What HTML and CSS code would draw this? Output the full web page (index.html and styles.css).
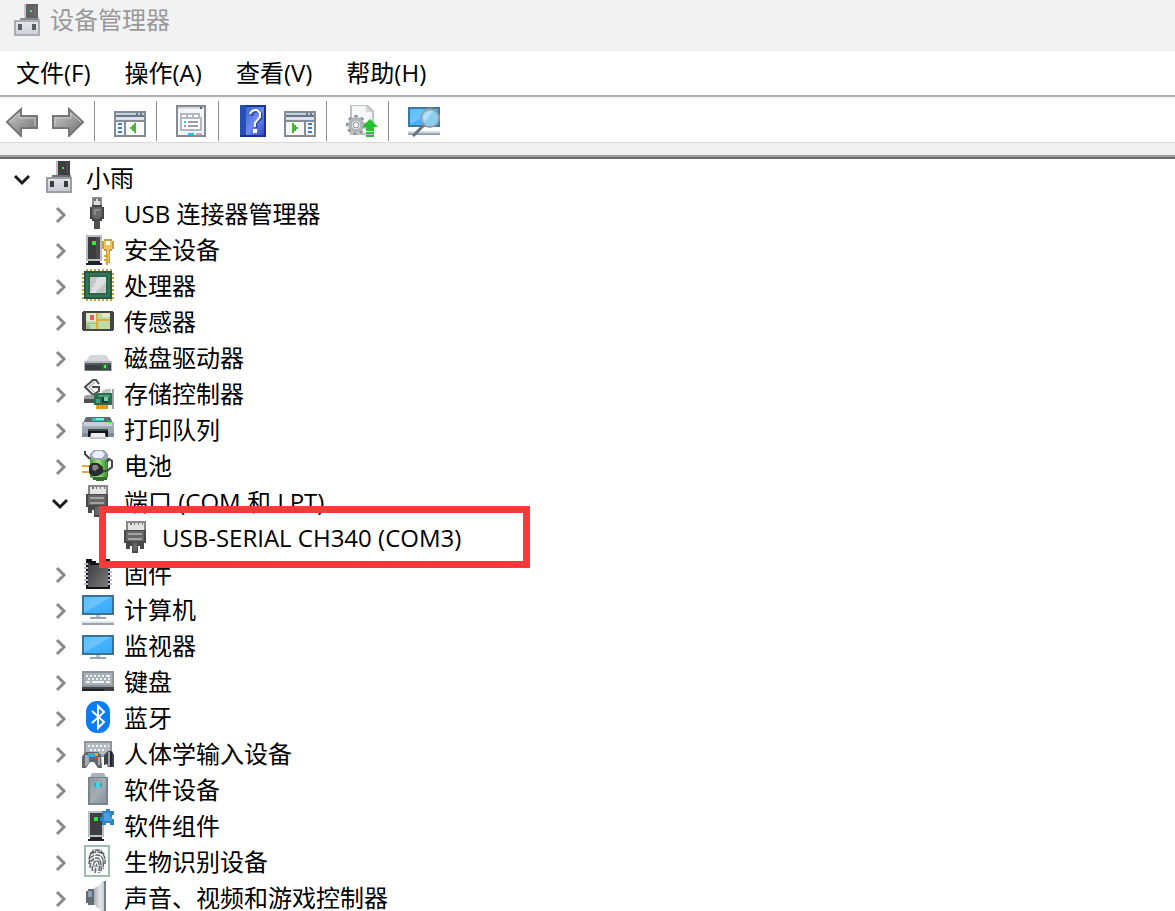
FILE: index.html
```html
<!DOCTYPE html>
<html lang="zh-CN">
<head>
<meta charset="utf-8">
<title>设备管理器</title>
<link rel="stylesheet" href="styles.css">
</head>
<body>
<svg class="defs" aria-hidden="true">
  <defs>
    <linearGradient id="screen" x1="0" y1="0" x2="1" y2="1"><stop offset="0" stop-color="#5cbcf8"/><stop offset=".45" stop-color="#6cc6ff"/><stop offset=".5" stop-color="#45b4ff"/><stop offset="1" stop-color="#35a8fb"/></linearGradient>
    <linearGradient id="steel" x1="0" y1="0" x2="0" y2="1"><stop offset="0" stop-color="#e2e4e8"/><stop offset="1" stop-color="#c8cad0"/></linearGradient>
    <linearGradient id="dark" x1="0" y1="0" x2="1" y2="1"><stop offset="0" stop-color="#3c3c3c"/><stop offset="1" stop-color="#7a7a7a"/></linearGradient>
    <linearGradient id="arrow" x1="0" y1="0" x2="1" y2="1"><stop offset="0" stop-color="#c8c8c8"/><stop offset=".55" stop-color="#999"/><stop offset="1" stop-color="#707070"/></linearGradient>
    <linearGradient id="help" x1="0" y1="0" x2="1" y2="1"><stop offset="0" stop-color="#3e66c8"/><stop offset=".5" stop-color="#6f8cf0"/><stop offset="1" stop-color="#2e4cc0"/></linearGradient>
    <linearGradient id="cell" x1="0" y1="0" x2="1" y2="0"><stop offset="0" stop-color="#3f9a2e"/><stop offset=".45" stop-color="#9be87c"/><stop offset="1" stop-color="#2f8a24"/></linearGradient>
    <linearGradient id="cone" x1="0" y1="0" x2="1" y2="0"><stop offset="0" stop-color="#a4acb3"/><stop offset=".5" stop-color="#e4e7ea"/><stop offset="1" stop-color="#b9c0c6"/></linearGradient>
    <linearGradient id="slab" x1="0" y1="0" x2="1" y2="1"><stop offset="0" stop-color="#8e979f"/><stop offset=".5" stop-color="#a5adb4"/><stop offset="1" stop-color="#87919a"/></linearGradient>
    <symbol id="machine" viewBox="0 0 32 32">
      <path fill="#bcc0c4" d="M12 0h14v15H12z"/><path fill="#3f3f41" d="M14 0h12v14H14z"/><path fill="#4b4b4e" d="M22 2h2v10h-2z"/><path fill="#30e83a" d="M18 6h2v2h-2z"/>
      <path fill="#6b6e74" d="M8 14h19v2H8z"/><path fill="#9a9da3" d="M2 16h26v16H2z"/><path fill="url(#steel)" d="M4 18h22v12H4z"/><path fill="#3a3b40" d="M6 20h4v6H6zM20 20h4v6h-4z"/>
    </symbol>
    <symbol id="usb" viewBox="0 0 32 32">
      <path fill="#8b8b8b" d="M10 0h10v8H10z"/><path fill="#dedede" d="M12 2h6v6h-6z"/><path fill="#666" d="M12 2h2v2h-2zM16 2h2v2h-2z"/>
      <path fill="#444" d="M8 10h2V8h10v2h2v12h-2v2H10v-2H8z"/><path fill="#666" d="M10 10h10v10h-2v2h-6v-2h-2z"/><path fill="#8c8c8c" d="M12 12h6v6h-6z"/><path fill="#686868" d="M14 14h4v4h-4z"/><path fill="#505050" d="M12 24h6v8h-6z"/>
    </symbol>
    <symbol id="security" viewBox="0 0 32 32">
      <path fill="#b8bec6" d="M4 2h16v26H4z"/><path fill="#3d3d3f" d="M6 4h12v22H6z"/><path fill="#4b4b4d" d="M14 4h4v22h-4z"/><path fill="#25f12c" d="M10 8h4v4h-4z"/><path fill="#202326" d="M6 28h12v2h2v2H4v-2h2z"/>
      <path fill="#c79a45" d="M22 6h8v2h2v8h-2v2h-2v12h-2v2h-2V18h-2v-2h-2V8h2z"/><path fill="#f0c45c" d="M22 8h8v8h-3v13h-2V16h-3z"/><path fill="#fff" d="M24 8h4v4h-4z"/><path fill="#d9a030" d="M22 22h4v2h-4zM22 26h4v2h-4z"/>
    </symbol>
    <symbol id="cpu" viewBox="0 0 32 32">
      <path fill="none" stroke="#c9a045" stroke-width="32" stroke-dasharray="2 2" d="M4 16h26"/><path fill="none" stroke="#c9a045" stroke-width="32" stroke-dasharray="2 2" d="M16 4v26"/>
      <path fill="#235943" d="M2 2h28v28H2z"/><path fill="#347557" d="M4 4h24v24H4z"/><path fill="#2b674d" d="M6 6h20v20H6z"/><path fill="#c4c5c6" d="M8 8h16v16H8z"/><path fill="#dedfe0" d="M16 8h8v6h-2v2h-2v2h-2v2h-2v2h-2v2H8v-2h2v-4h2v-4h2v-4h2z"/>
    </symbol>
    <symbol id="sensor" viewBox="0 0 32 32">
      <path fill="#454545" d="M1 6h30v1h1v18h-1v1H1v-1H0V7h1z"/><path fill="#bedba0" d="M4 8h24v16H4z"/><path fill="#dcebc8" d="M4 8h10v8H4zM20 8h8v4h-8z"/><path fill="#9fbc87" d="M4 20h4v4H4z"/><path fill="#dcad3c" d="M14 8h2v16h-2zM16 14h12v2H16zM4 18h10v1H4z"/><path fill="#e55b60" d="M8 10h4v5H8z"/>
    </symbol>
    <symbol id="disk" viewBox="0 0 32 32">
      <path fill="#d4d6d9" d="M8 14h16l5 7H3z"/><path fill="#b5b8bd" d="M2 20h28v10H2z"/><path fill="#3d4145" d="M3 22h26v7H3z"/><path fill="#54595f" d="M3 22h26v2H3z"/><path fill="#247a28" d="M20 24h6v4h-6z"/><path fill="#39ff3d" d="M22 24h2v3h-2z"/><path fill="#777c84" d="M3 29h26v1H3z"/>
    </symbol>
    <symbol id="storage" viewBox="0 0 32 32">
      <path fill="#f4f4f4" stroke="#4c4c4c" stroke-width="2" d="M17 7l-3-4h-3l-8 7 8 8 6-4v-4h-7"/><path fill="none" stroke="#999" stroke-width="1" d="M13 5l-6 5 5 5"/><path fill="#9b9fa3" d="M2 20l2-2h10v8H2z"/><path fill="#4c5053" d="M2 22h10v4H2z"/><path fill="#a1a5a8" d="M30 12h2v20h-2z"/>
      <path fill="#bfc4c8" d="M20 14l4-2h5v5h-9z"/><path fill="#286d50" d="M12 18l4-2h14v12H12z"/><path fill="#48a277" d="M16 18h12v2H16zM14 22h4v4h-4z"/><path fill="#183f31" d="M20 20h6v6h-6z"/><path fill="#82c9a5" d="M22 20h4v4h-4z"/><path fill="#f2a21c" d="M14 28h12v4H14z"/><path fill="#d87f0c" d="M16 28h1v4h-1zM20 28h1v4h-1zM24 28h1v4h-1z"/>
    </symbol>
    <symbol id="printer" viewBox="0 0 32 32">
      <path fill="#606970" d="M4 4h24l3 6H1z"/><path fill="#39beb4" d="M10 5h12v3H10z"/><path fill="#7beae0" d="M14 5h8v2h-8z"/><path fill="#aab4be" d="M0 9h32v14H0z"/><path fill="#c7ced5" d="M2 9h28v4H2z"/><path fill="#7f8c99" d="M0 18h32v6H0z"/><path fill="#9ba7b2" d="M0 14h32v6H0z"/><path fill="#16e524" d="M26 8h3v2h-3z"/><path fill="#111518" d="M6 16h20v8H6z"/><path fill="#3e454b" d="M6 16h20v2H6z"/><path fill="#eee" d="M9 20h14l1 6H8z"/><path fill="#c6c6c6" d="M8 24h16v2H8z"/>
    </symbol>
    <symbol id="battery" viewBox="0 0 32 32">
      <path fill="url(#cell)" d="M8 6h18v22l-3 3H13l-5-3z"/><path fill="#306e29" d="M11 28h14v3h-3v1h-8v-1h-3z"/><path fill="#9aa2b4" d="M8 5l4-4h10l4 4v4l-3 2H12L8 9z"/><path fill="#eceefa" d="M11 4l3-2h6l3 3-3 4h-7l-3-2z"/>
      <path fill="none" stroke="#444" stroke-width="2" d="M3 2v3l5 5M20 22h5l5-4v-6l-3-2-2 3"/><path fill="#e1ad35" d="M0 16h8v2H0zM0 22h8v2H0z"/><path fill="#2c2c2e" d="M10 14h6l5 4v6l-5 3h-6l-3-3v-7z"/><path fill="#89898c" d="M11 16h4l2 3-4 3-3-2z"/>
    </symbol>
    <symbol id="port" viewBox="0 0 32 32">
      <path fill="#878787" d="M6 0h20v9H6z"/><path fill="#e3e3e3" d="M8 2h16v7H8z"/><path fill="#777" d="M10 2h2v2h-2zM14 2h1v2h-1zM18 2h1v2h-1zM22 2h1v2h-1z"/><path fill="#494949" d="M4 9h22v13H4zM6 22h4v6H6zM20 22h4v6h-4zM10 22h10v3H10zM12 24h6v8h-6z"/><path fill="#686868" d="M6 10h18v10H6zM13 22h4v8h-4z"/><path fill="#a4a4a4" d="M8 12h14v2H8zM8 17h14v2H8z"/>
    </symbol>
    <symbol id="firmware" viewBox="0 0 32 32">
      <path fill="#151515" d="M4 2h6v2h4v2h4V4h2V2h8v30H4z"/><path fill="url(#dark)" d="M6 6h2v2h10V6h8v24H6z"/><path fill="#b9bec8" d="M2 6h4v2H2zM2 10h4v2H2zM2 14h4v2H2zM2 18h4v2H2zM2 22h4v2H2zM2 26h4v2H2zM26 6h4v2h-4zM26 10h4v2h-4zM26 14h4v2h-4zM26 18h4v2h-4zM26 22h4v2h-4zM26 26h4v2h-4z"/>
    </symbol>
    <symbol id="computer" viewBox="0 0 32 32">
      <path fill="#3c7296" d="M0 2h32v20H0z"/><path fill="url(#screen)" d="M2 4h28v16H2z"/><path fill="#b8c1ca" d="M14 22h4v2h-4z"/><path fill="#93a6b7" d="M8 24h16v2H8z"/><path fill="#e1e6eb" d="M0 28h32v2H0z"/><path fill="#94a2b4" d="M0 30h32v2H0z"/>
    </symbol>
    <symbol id="monitor" viewBox="0 0 32 32">
      <path fill="#3c7296" d="M0 6h32v20H0z"/><path fill="url(#screen)" d="M2 8h28v16H2z"/><path fill="#b8c1ca" d="M14 26h4v2h-4z"/><path fill="#93a6b7" d="M8 28h16v2H8z"/>
    </symbol>
    <symbol id="keyboard" viewBox="0 0 32 32">
      <path fill="#8e959c" d="M0 6h32v16H0z"/><path fill="#a9b0b6" d="M2 8h28v12H2z"/><path fill="#3b4146" d="M0 22h32v4H0z"/><path fill="#1f2225" d="M0 24h22v2H0z"/><path fill="#f0f2f4" d="M4 10h2v2H4zM8 10h2v2H8zM12 10h2v2h-2zM16 10h2v2h-2zM20 10h2v2h-2zM24 10h4v2h-4zM6 13h2v2H6zM10 13h2v2h-2zM14 13h2v2h-2zM18 13h2v2h-2zM22 13h2v2h-2zM26 13h2v2h-2zM4 16h4v2H4zM10 16h12v2H10zM24 16h4v2h-4z"/>
    </symbol>
    <symbol id="bluetooth" viewBox="0 0 32 32">
      <rect x="4" width="24" height="32" rx="11" fill="#0b7cf5"/><path fill="none" stroke="#fff" stroke-width="2" d="M10 10l12 11-6 6V5l6 6-12 11"/>
    </symbol>
    <symbol id="hid" viewBox="0 0 32 32">
      <path fill="#8e959c" d="M2 4h28v16H2z"/><path fill="#b3bac0" d="M4 6h24v12H4z"/><path fill="#f4f5f6" d="M6 8h2v2H6zM10 8h2v2h-2zM14 8h2v2h-2zM18 8h2v2h-2zM22 8h2v2h-2zM26 8h1v2h-1zM8 12h2v2H8zM12 12h2v2h-2zM16 12h2v2h-2zM20 12h2v2h-2z"/>
      <path fill="#5e656b" d="M1 18l3-3h12l3 3 1 13h-4l-4-6H8l-4 6H0V20z"/><path fill="#a4abb1" d="M3 18h4v8l-4 4zM16 20h2v8h-2z"/><path fill="#3aa8e8" d="M6 16h7v4H6z"/><path fill="#f9a633" d="M13 16h3v3h-3z"/><path fill="#ec3f3b" d="M13 20h2v2h-2z"/><path fill="#3e444a" d="M22 18l4-4h4l2 4v12h-6l-1-3-3 1z"/><path fill="#9aa2aa" d="M26 15h2v14h-2z"/><path fill="#20262b" d="M28 15h2v14h-2z"/>
    </symbol>
    <symbol id="device" viewBox="0 0 32 32">
      <path fill="#aab1b8" d="M10 0h12l2 4H8z"/><path fill="#788490" d="M6 4h20v28H6z"/><path fill="url(#slab)" d="M8 5h16v25H8z"/><path fill="#4f9ba4" d="M12 10h8v4h-8z"/><path fill="#35dbe7" d="M14 9h4v6h-4z"/>
    </symbol>
    <symbol id="component" viewBox="0 0 32 32">
      <path fill="#b9bfc6" d="M6 2h16v26H6z"/><path fill="#3f3f41" d="M8 4h12v22H8z"/><path fill="#25ee2a" d="M12 8h4v4h-4z"/><path fill="#22272a" d="M8 28h12v2h2v2H6v-2h2z"/><path fill="#2c83c5" d="M20 2h4V0h4v2h4v4h-2v4h2v6h-4v-2h-4v2h-4v-4h-2V8h2z"/><path fill="#4b9ddb" d="M22 4h6v4h2v4h-8z"/>
    </symbol>
    <symbol id="biometric" viewBox="0 0 32 32">
      <path fill="#9dbdb4" d="M2 0h26v32H2z"/><path fill="#f7f8f8" d="M4 2h22v28H4z"/><path fill="none" stroke="#5c6468" stroke-width="1.4" stroke-dasharray="5 1" d="M8 9q7-8 14 0M7 14q1-7 8-7t8 7v5M7 19q0-9 8-9t6 14M8 23q0-10 7-10 5 0 4 14M10 26q1-10 5-10 3 0 2 12M13 28q1-9 2-9"/><path fill="none" stroke="#777f83" stroke-width="1" stroke-dasharray="2 1" d="M10 5h10M8 16h14M8 21h13M10 25h10"/>
    </symbol>
    <symbol id="sound" viewBox="0 0 32 32">
      <path fill="#5f6c78" d="M4 10h2V8h6v16H6v-2H4z"/><path fill="#8fa1ae" d="M6 10h4v6H6z"/><path fill="url(#cone)" d="M12 8l2-2h2V4h2V2h2V0h4v32h-4v-2h-2v-2h-2v-2h-2v-2h-2z"/><path fill="#737f8a" d="M22 0h2v32h-2z"/>
    </symbol>
    <symbol id="back" viewBox="0 0 32 32">
      <path fill="url(#arrow)" stroke="#777" stroke-width="2" d="M1 17L15 4v7h16v12H15v8z"/><path fill="none" stroke="#ccc" d="M3 17L13 8v5h16v8"/>
    </symbol>
    <symbol id="forward" viewBox="0 0 32 32">
      <path fill="url(#arrow)" stroke="#777" stroke-width="2" d="M31 17L17 4v7H1v12h16v8z"/><path fill="none" stroke="#ccc" d="M29 17L19 8v5H3v8"/>
    </symbol>
    <symbol id="pane-left" viewBox="0 0 32 32">
      <path fill="#868c95" d="M0 6h32v26H0z"/><path fill="#c9d2dd" d="M2 8h28v2H2z"/><path fill="#66758c" d="M2 10h28v2H2zM22 8h2v2h-2zM26 8h2v2h-2z"/><path fill="#dce2e8" d="M2 12h28v3H2z"/><path fill="#f8f9fb" d="M2 17h8v13H2zM12 17h18v13H12z"/><path fill="#457dbd" d="M4 18h4v2H4zM4 22h4v2H4zM4 26h4v2H4z"/><path fill="#4db535" d="M16 22h2v-2h2v-2h2v10h-2v-2h-2v-2h-2z"/>
    </symbol>
    <symbol id="properties" viewBox="0 0 32 32">
      <path fill="#858b94" d="M0 0h30v32H0z"/><path fill="#f6f7f8" d="M2 2h26v28H2z"/><path fill="#d4dbe4" d="M2 2h26v2H2z"/><path fill="#49658c" d="M24 2h2v2h-2z"/><path fill="#b1b8c3" d="M4 8h20v4h2v14H4z"/><path fill="#fff" d="M6 14h18v10H6zM6 10h4v2H6zM12 10h4v2h-4zM18 10h4v2h-4z"/><path fill="#16c5f2" d="M8 16h2v2H8zM12 28h6v2h-6z"/><path fill="#999fa7" d="M12 16h10v2H12zM8 20h2v2H8zM12 20h10v2H12z"/><path fill="#b2b7bd" d="M20 28h6v2h-6z"/>
    </symbol>
    <symbol id="question" viewBox="0 0 32 32">
      <path fill="#173599" d="M2 0h26v32H2z"/><path fill="url(#help)" d="M8 2h18v28H8z"/><path fill="#2450b7" d="M2 0h6v30H2z"/><path fill="none" stroke="#2c48aa" stroke-width="3" d="M14 11V8l3-2h3l3 3v4l-5 5v5"/><path fill="none" stroke="#fff" stroke-width="2" d="M12 9l2-3 3-1h2l3 3v4l-5 6v4"/><path fill="#fff" d="M15 24h4v4h-4z"/>
    </symbol>
    <symbol id="pane-right" viewBox="0 0 32 32">
      <path fill="#868c95" d="M0 6h32v26H0z"/><path fill="#c9d2dd" d="M2 8h28v2H2z"/><path fill="#66758c" d="M2 10h28v2H2zM22 8h2v2h-2zM26 8h2v2h-2z"/><path fill="#dce2e8" d="M2 12h28v3H2z"/><path fill="#f8f9fb" d="M2 17h18v13H2zM22 17h8v13h-8z"/><path fill="#457dbd" d="M24 18h4v2h-4zM24 22h4v2h-4zM24 26h4v2h-4z"/><path fill="#4db535" d="M8 18h2v2h2v2h2v2h-2v2h-2v2H8z"/>
    </symbol>
    <symbol id="update" viewBox="0 0 32 32">
      <path fill="#bfc2c5" d="M4 0h18l6 6v24H4z"/><path fill="#f5f6f7" d="M6 1h14v6h6v21H6z"/><path fill="#d7dadd" d="M20 1l6 6h-6z"/><circle cx="10" cy="20" r="8" fill="none" stroke="#8c9196" stroke-width="4" stroke-dasharray="3 3"/><circle cx="10" cy="20" r="6" fill="#fff" stroke="#afb4b9" stroke-width="4"/><circle cx="10" cy="20" r="3" fill="#f5f5f5" stroke="#858b90"/><path fill="#23c32c" d="M16 22l8-8 8 8h-4v4h-8v-4zM20 27h8v2h-8zM20 30h8v2h-8z"/>
    </symbol>
    <symbol id="scan" viewBox="0 0 32 32">
      <path fill="#3e789f" d="M0 2h32v20H0z"/><path fill="url(#screen)" d="M2 4h28v16H2z"/><path fill="#d4dbe2" d="M0 26h32v2H0z"/><path fill="#92a3b3" d="M0 28h32v2H0z"/><path stroke="#65737f" stroke-width="3" d="M16 20L5 31"/><circle cx="22" cy="13" r="9" fill="#8dceef" stroke="#8f9eaa" stroke-width="2"/><path fill="#b4e1fb" d="M15 12q2-7 10-6l-8 11z"/>
    </symbol>
    <symbol id="closed" viewBox="0 0 20 20"><path fill="none" stroke="#8b8b8b" stroke-width="3" d="M7 3l7 7-7 7"/></symbol>
    <symbol id="open" viewBox="0 0 20 20"><path fill="none" stroke="#1b1b1b" stroke-width="3" d="M3 7l7 7 7-7"/></symbol>
  </defs>
</svg>
<div class="window">
  <header class="titlebar"><svg class="icon title-icon"><use href="#machine"/></svg><h1 class="title">设备管理器</h1></header>
  <nav class="menubar">
    <button class="menu">文件(F)</button><button class="menu">操作(A)</button><button class="menu">查看(V)</button><button class="menu">帮助(H)</button>
  </nav>
  <div class="toolbar" role="toolbar">
    <button class="tool" aria-label="后退"><svg class="icon"><use href="#back"/></svg></button>
    <button class="tool" aria-label="前进"><svg class="icon"><use href="#forward"/></svg></button>
    <span class="separator"></span>
    <button class="tool" aria-label="显示控制台树"><svg class="icon"><use href="#pane-left"/></svg></button>
    <span class="separator"></span>
    <button class="tool" aria-label="属性"><svg class="icon"><use href="#properties"/></svg></button>
    <span class="separator"></span>
    <button class="tool" aria-label="帮助"><svg class="icon"><use href="#question"/></svg></button>
    <button class="tool" aria-label="显示操作窗格"><svg class="icon"><use href="#pane-right"/></svg></button>
    <span class="separator"></span>
    <button class="tool" aria-label="更新驱动程序"><svg class="icon"><use href="#update"/></svg></button>
    <span class="separator"></span>
    <button class="tool" aria-label="扫描硬件改动"><svg class="icon"><use href="#scan"/></svg></button>
  </div>
  <div class="band"></div>
  <main class="tree">
    <ul class="branch root">
      <li>
        <div class="row"><button class="expander" aria-label="折叠"><svg class="chevron"><use href="#open"/></svg></button><svg class="icon"><use href="#machine"/></svg><span class="label">小雨</span></div>
        <ul class="branch">
          <li class="row"><button class="expander" aria-label="展开"><svg class="chevron"><use href="#closed"/></svg></button><svg class="icon"><use href="#usb"/></svg><span class="label">USB 连接器管理器</span></li>
          <li class="row"><button class="expander" aria-label="展开"><svg class="chevron"><use href="#closed"/></svg></button><svg class="icon"><use href="#security"/></svg><span class="label">安全设备</span></li>
          <li class="row"><button class="expander" aria-label="展开"><svg class="chevron"><use href="#closed"/></svg></button><svg class="icon"><use href="#cpu"/></svg><span class="label">处理器</span></li>
          <li class="row"><button class="expander" aria-label="展开"><svg class="chevron"><use href="#closed"/></svg></button><svg class="icon"><use href="#sensor"/></svg><span class="label">传感器</span></li>
          <li class="row"><button class="expander" aria-label="展开"><svg class="chevron"><use href="#closed"/></svg></button><svg class="icon"><use href="#disk"/></svg><span class="label">磁盘驱动器</span></li>
          <li class="row"><button class="expander" aria-label="展开"><svg class="chevron"><use href="#closed"/></svg></button><svg class="icon"><use href="#storage"/></svg><span class="label">存储控制器</span></li>
          <li class="row"><button class="expander" aria-label="展开"><svg class="chevron"><use href="#closed"/></svg></button><svg class="icon"><use href="#printer"/></svg><span class="label">打印队列</span></li>
          <li class="row"><button class="expander" aria-label="展开"><svg class="chevron"><use href="#closed"/></svg></button><svg class="icon"><use href="#battery"/></svg><span class="label">电池</span></li>
          <li>
            <div class="row"><button class="expander" aria-label="折叠"><svg class="chevron"><use href="#open"/></svg></button><svg class="icon"><use href="#port"/></svg><span class="label">端口 (COM 和 LPT)</span></div>
            <ul class="branch">
              <li class="row leaf"><svg class="icon"><use href="#port"/></svg><span class="label">USB-SERIAL CH340 (COM3)</span><span class="highlight"></span></li>
            </ul>
          </li>
          <li class="row"><button class="expander" aria-label="展开"><svg class="chevron"><use href="#closed"/></svg></button><svg class="icon"><use href="#firmware"/></svg><span class="label">固件</span></li>
          <li class="row"><button class="expander" aria-label="展开"><svg class="chevron"><use href="#closed"/></svg></button><svg class="icon"><use href="#computer"/></svg><span class="label">计算机</span></li>
          <li class="row"><button class="expander" aria-label="展开"><svg class="chevron"><use href="#closed"/></svg></button><svg class="icon"><use href="#monitor"/></svg><span class="label">监视器</span></li>
          <li class="row"><button class="expander" aria-label="展开"><svg class="chevron"><use href="#closed"/></svg></button><svg class="icon"><use href="#keyboard"/></svg><span class="label">键盘</span></li>
          <li class="row"><button class="expander" aria-label="展开"><svg class="chevron"><use href="#closed"/></svg></button><svg class="icon"><use href="#bluetooth"/></svg><span class="label">蓝牙</span></li>
          <li class="row"><button class="expander" aria-label="展开"><svg class="chevron"><use href="#closed"/></svg></button><svg class="icon"><use href="#hid"/></svg><span class="label">人体学输入设备</span></li>
          <li class="row"><button class="expander" aria-label="展开"><svg class="chevron"><use href="#closed"/></svg></button><svg class="icon"><use href="#device"/></svg><span class="label">软件设备</span></li>
          <li class="row"><button class="expander" aria-label="展开"><svg class="chevron"><use href="#closed"/></svg></button><svg class="icon"><use href="#component"/></svg><span class="label">软件组件</span></li>
          <li class="row"><button class="expander" aria-label="展开"><svg class="chevron"><use href="#closed"/></svg></button><svg class="icon"><use href="#biometric"/></svg><span class="label">生物识别设备</span></li>
          <li class="row"><button class="expander" aria-label="展开"><svg class="chevron"><use href="#closed"/></svg></button><svg class="icon"><use href="#sound"/></svg><span class="label">声音、视频和游戏控制器</span></li>
        </ul>
      </li>
    </ul>
  </main>
</div>
</body>
</html>
```
FILE: styles.css
```css
* {
  box-sizing: border-box;
}

body {
  margin: 0;
  background: #fff;
  color: #000;
  font: 24px/36px "Open Sans", "Noto Sans CJK SC", sans-serif;
}

button {
  border: 0;
  padding: 0;
  background: none;
  color: inherit;
  font: inherit;
}

.defs {
  position: absolute;
  width: 0;
  height: 0;
}

.window {
  display: flex;
  flex-direction: column;
  height: 100vh;
  overflow: hidden;
}

.icon {
  flex: none;
  display: block;
  width: 32px;
  height: 32px;
}

.titlebar {
  display: flex;
  align-items: flex-start;
  gap: 6px;
  flex: none;
  height: 51px;
  padding: 4px 12px;
  background: #f2f2f2;
}

.title-icon {
  opacity: 0.8;
}

.title {
  margin: 0;
  color: #999;
  font-size: 24px;
  line-height: 32px;
  font-weight: 400;
}

.menubar {
  display: flex;
  flex: none;
  gap: 2px;
  height: 46px;
  border-bottom: 2px solid #b2b2b2;
}

.menu {
  padding: 0 16px;
}

.toolbar {
  display: flex;
  flex: none;
  gap: 2px;
  height: 46px;
  padding: 2px 0 1px;
  border-top: 2px solid #f1f6fb;
  border-bottom: 1px solid #dadada;
}

.tool {
  width: 44px;
  padding: 0 6px;
}

.separator {
  width: 1px;
  margin: 0 11px 0 2px;
  background: #8c8c8c;
}

.band {
  flex: none;
  height: 16px;
  background: #f0f0f0;
  border-bottom: 2px solid #696969;
  box-shadow: inset 0 -2px #a0a0a0;
}

.tree {
  flex: 1;
  min-height: 0;
  overflow: hidden;
}

.branch {
  margin: 0;
  padding: 0 0 0 38px;
  list-style: none;
}

.root {
  padding-left: 12px;
}

.row {
  display: flex;
  align-items: center;
  height: 36px;
}

.expander {
  width: 20px;
  height: 24px;
  margin-right: 12px;
  padding-top: 4px;
}

.chevron {
  display: block;
  width: 20px;
  height: 20px;
}

.label {
  margin: 2px 0 0 10px;
  line-height: 26px;
  white-space: pre;
}

.leaf {
  position: relative;
  padding-left: 32px;
}

.highlight {
  position: absolute;
  inset: -13px auto -13px 11px;
  width: 431px;
  border: 7px solid #fc3838;
}
```
